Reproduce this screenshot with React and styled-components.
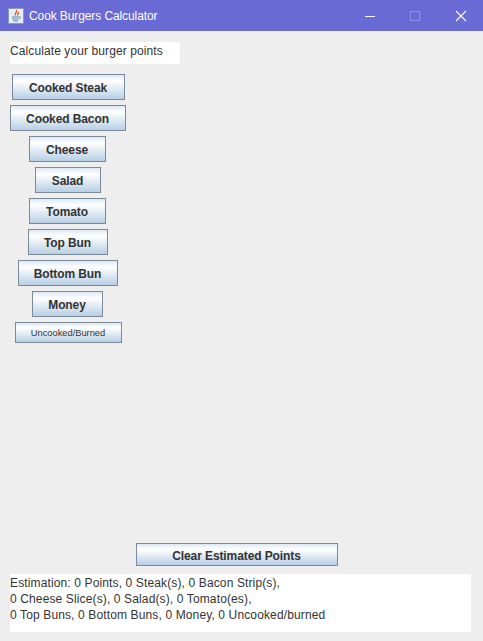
import React from "react";
import styled, { createGlobalStyle } from "styled-components";

const GlobalStyle = createGlobalStyle`
  html, body {
    margin: 0;
    padding: 0;
    background: #eeeeee;
  }
  * {
    box-sizing: border-box;
  }
`;

const Window = styled.div`
  width: 483px;
  height: 641px;
  display: flex;
  flex-direction: column;
  background: #eeeeee;
  font-family: "Liberation Sans", Arial, sans-serif;
  overflow: hidden;
`;

const TitleBar = styled.div`
  height: 31px;
  flex: none;
  display: flex;
  align-items: center;
  padding: 0 1px 0 8px;
  background: #6a6ad5;
  color: #fff;
  font-size: 12px;
  letter-spacing: -0.1px;
`;

const TitleText = styled.span`
  margin-left: 5px;
  flex: 1;
`;

const WinButton = styled.div`
  width: 45px;
  height: 31px;
  display: flex;
  align-items: center;
  justify-content: center;
`;

const Content = styled.div`
  flex: 1;
  display: flex;
  flex-direction: column;
  padding: 11px 12px 9px 10px;
`;

const Heading = styled.div`
  width: 170px;
  height: 22px;
  background: #fff;
  color: #333;
  font-size: 12px;
  line-height: 18px;
  letter-spacing: 0.1px;
`;

const ButtonColumn = styled.div`
  margin-top: 10px;
  display: flex;
  flex-direction: column;
  align-items: flex-start;
  gap: 5px;
`;

const MetalButton = styled.button`
  width: ${(p) => p.$w}px;
  height: ${(p) => p.$h || 26}px;
  margin-left: ${(p) => p.$x || 0}px;
  padding: ${(p) => (p.$small ? "0 1px 0 0" : "2px 1px 0 0")};
  border: 1px solid #7a8a99;
  background: linear-gradient(to bottom, #dde8f3 0%, #ffffff 25%, #b8cfe5 100%);
  color: #333;
  font-family: inherit;
  font-size: ${(p) => (p.$small ? "9.3px" : "12px")};
  font-weight: ${(p) => (p.$small ? "normal" : "bold")};
  letter-spacing: ${(p) => (p.$small ? "0" : "-0.1px")};
  white-space: nowrap;
`;

const Footer = styled.div`
  margin-top: auto;
  display: flex;
  flex-direction: column;
`;

const ClearRow = styled.div`
  display: flex;
  padding-left: 126px;
  margin-bottom: 8px;
`;

const Estimate = styled.div`
  width: 461px;
  height: 58px;
  background: #fff;
  color: #333;
  font-size: 12px;
  line-height: 16px;
  letter-spacing: 0.13px;
  padding-top: 1px;
`;

const items = [
  { label: "Cooked Steak", w: 113, x: 2 },
  { label: "Cooked Bacon", w: 116, x: 0 },
  { label: "Cheese", w: 77, x: 19 },
  { label: "Salad", w: 66, x: 25 },
  { label: "Tomato", w: 77, x: 19 },
  { label: "Top Bun", w: 80, x: 18 },
  { label: "Bottom Bun", w: 100, x: 8 },
  { label: "Money", w: 71, x: 22 },
];

const App = () => {
  return (
    <Window>
      <GlobalStyle />
      <TitleBar>
        <svg width="16" height="16" viewBox="0 0 16 16">
          <rect x="0.5" y="0.5" width="15" height="15" fill="#e8eef5" stroke="#8a9ab0" />
          <path d="M8.5 2c1.5 2-2.5 3-1 5.5M10.5 4c.5 1.5-1.5 2-.7 3.5" stroke="#e0602a" strokeWidth="1.4" fill="none" />
          <path d="M4 9h7M4 11h6.5M5 13h5" stroke="#5a86ae" strokeWidth="1.2" fill="none" />
          <path d="M11 8.5c2 0 2 2 0 2.5" stroke="#5a86ae" fill="none" />
        </svg>
        <TitleText>Cook Burgers Calculator</TitleText>
        <WinButton>
          <svg width="12" height="12" viewBox="0 0 12 12">
            <path d="M1 6.5h10" stroke="#fff" />
          </svg>
        </WinButton>
        <WinButton>
          <svg width="12" height="12" viewBox="0 0 12 12">
            <rect x="1.5" y="1.5" width="9" height="9" fill="none" stroke="#8f8fe2" />
          </svg>
        </WinButton>
        <WinButton>
          <svg width="15" height="12" viewBox="0 0 15 12">
            <path d="M4 1l10 10M14 1L4 11" stroke="#fff" strokeWidth="1.1" />
          </svg>
        </WinButton>
      </TitleBar>
      <Content>
        <Heading>Calculate your burger points</Heading>
        <ButtonColumn>
          {items.map((item) => (
            <MetalButton key={item.label} $w={item.w} $x={item.x}>
              {item.label}
            </MetalButton>
          ))}
          <MetalButton $w={107} $h={21} $x={5} $small>
            Uncooked/Burned
          </MetalButton>
        </ButtonColumn>
        <Footer>
          <ClearRow>
            <MetalButton $w={202} $h={23}>
              Clear Estimated Points
            </MetalButton>
          </ClearRow>
          <Estimate>
            Estimation: 0 Points, 0 Steak(s), 0 Bacon Strip(s),
            <br />
            0 Cheese Slice(s), 0 Salad(s), 0 Tomato(es),
            <br />
            0 Top Buns, 0 Bottom Buns, 0 Money, 0 Uncooked/burned
          </Estimate>
        </Footer>
      </Content>
    </Window>
  );
};

export default App;
